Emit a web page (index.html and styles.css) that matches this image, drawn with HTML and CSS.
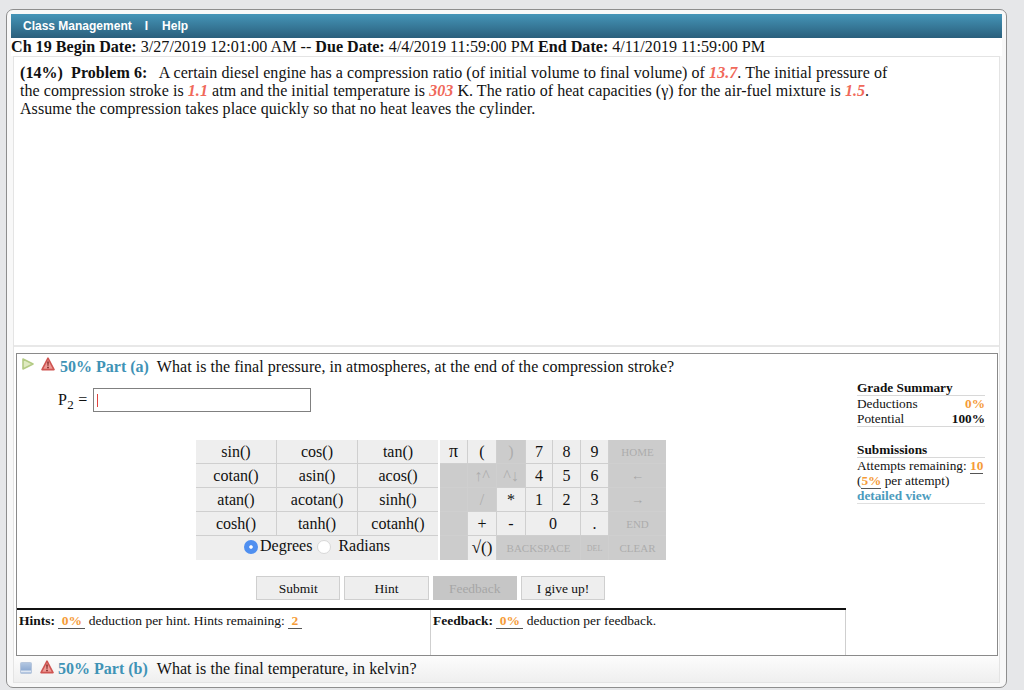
FILE: index.html
```html
<!DOCTYPE html>
<html lang="en">
<head>
<meta charset="utf-8">
<title>Problem 6</title>
<link rel="stylesheet" href="styles.css">
</head>
<body>
<div class="card">
  <nav class="topbar"><span>Class Management</span><span class="sep">I</span><span>Help</span></nav>
  <div class="dates"><b>Ch 19 Begin Date:</b> 3/27/2019 12:01:00 AM -- <b>Due Date:</b> 4/4/2019 11:59:00 PM <b>End Date:</b> 4/11/2019 11:59:00 PM</div>
  <div class="content">
  <section class="problem">
    <p><b>(14%)&nbsp; Problem 6:</b>&nbsp;&nbsp; A certain diesel engine has a compression ratio (of initial volume to final volume) of <i class="val">13.7</i>. The initial pressure of the compression stroke is <i class="val">1.1</i> atm and the initial temperature is <i class="val">303</i> K. The ratio of heat capacities (γ) for the air-fuel mixture is <i class="val">1.5</i>.<br>Assume the compression takes place quickly so that no heat leaves the cylinder.</p>
  </section>
  <section class="part">
    <div class="part-head">
      <svg class="ico-play" width="12" height="12" viewBox="0 0 12 12"><path d="M1 1 L11 6 L1 11 Z" fill="#dfeac0" stroke="#b3cb84" stroke-width="1.6" stroke-linejoin="round"/></svg>
      <svg class="ico-warn" width="14" height="14" viewBox="0 0 14 14"><path d="M7 1.2 L13 12.6 H1 Z" fill="#ee9a96" stroke="#cf5552" stroke-width="1.6" stroke-linejoin="round"/><path d="M6.2 4.5 H7.8 L7.4 9 H6.6 Z M6.2 9.8 H7.8 V11.3 H6.2 Z" fill="#7d2522"/></svg>
      <span class="part-name">50% Part (a)</span><span class="question">What is the final pressure, in atmospheres, at the end of the compression stroke?</span>
    </div>
    <div class="part-body">
      <div class="work">
        <div class="answer"><span class="label">P<sub>2</sub> =</span><div class="input"><span class="caret"></span></div></div>
        <div class="calc">
          <div class="funcs">
            <div class="key">sin()</div><div class="key">cos()</div><div class="key">tan()</div>
            <div class="key">cotan()</div><div class="key">asin()</div><div class="key">acos()</div>
            <div class="key">atan()</div><div class="key">acotan()</div><div class="key">sinh()</div>
            <div class="key">cosh()</div><div class="key">tanh()</div><div class="key">cotanh()</div>
            <div class="mode"><span class="radio on"></span>Degrees<span class="radio"></span><span class="rad">Radians</span></div>
          </div>
          <div class="pad">
            <div class="key pi">π</div><div class="key">(</div><div class="key off">)</div><div class="key">7</div><div class="key">8</div><div class="key">9</div><div class="key off small">HOME</div>
            <div class="key off"></div><div class="key off">↑^</div><div class="key off">^↓</div><div class="key">4</div><div class="key">5</div><div class="key">6</div><div class="key off arrow">←</div>
            <div class="key off"></div><div class="key off">/</div><div class="key">*</div><div class="key">1</div><div class="key">2</div><div class="key">3</div><div class="key off arrow">→</div>
            <div class="key off"></div><div class="key">+</div><div class="key">-</div><div class="key span2">0</div><div class="key">.</div><div class="key off small">END</div>
            <div class="key off"></div><div class="key root">√()</div><div class="key off small span3">BACKSPACE</div><div class="key off tiny">DEL</div><div class="key off small">CLEAR</div>
          </div>
        </div>
        <div class="actions">
          <div class="btn">Submit</div><div class="btn">Hint</div><div class="btn off">Feedback</div><div class="btn">I give up!</div>
        </div>
      </div>
      <aside class="side">
        <h4 class="side-title">Grade Summary</h4>
        <div class="row"><span>Deductions</span><b class="orange">0%</b></div>
        <div class="row last"><span>Potential</span><b>100%</b></div>
        <h4 class="side-title sub">Submissions</h4>
        <div class="att">Attempts remaining: <b class="orange under">10</b><br>(<b class="orange under">5%</b> per attempt)<br><a class="detail">detailed view</a></div>
      </aside>
    </div>
    <div class="notes">
      <div class="note hints"><b>Hints:</b> <span class="pct">&nbsp;0%&nbsp;</span>&nbsp;deduction per hint. Hints remaining: <span class="pct">&nbsp;2&nbsp;</span></div>
      <div class="note feedback"><b>Feedback:</b> <span class="pct">&nbsp;0%&nbsp;</span>&nbsp;deduction per feedback.</div>
    </div>
  </section>
  <div class="part-b">
    <svg class="ico-min" width="12" height="12" viewBox="0 0 12 12"><defs><linearGradient id="minfill" x1="0" y1="0" x2="0" y2="1"><stop offset="0" stop-color="#b4c8e2"/><stop offset="1" stop-color="#7f9fcc"/></linearGradient></defs><rect x=".5" y=".5" width="11" height="11" rx="1" fill="url(#minfill)" stroke="#b7c6dc"/><rect x="1" y="8.5" width="10" height="2" fill="#dfe7f2"/></svg>
    <svg class="ico-warn" width="14" height="14" viewBox="0 0 14 14"><path d="M7 1.2 L13 12.6 H1 Z" fill="#ee9a96" stroke="#cf5552" stroke-width="1.6" stroke-linejoin="round"/><path d="M6.2 4.5 H7.8 L7.4 9 H6.6 Z M6.2 9.8 H7.8 V11.3 H6.2 Z" fill="#7d2522"/></svg>
    <span class="part-name">50% Part (b)</span><span class="question">What is the final temperature, in kelvin?</span>
  </div>
  </div>
</div>
</body>
</html>
```

FILE: styles.css
```css
* { box-sizing: border-box; }
html, body { height: 100%; }
body {
  margin: 0;
  background: #e6e7e9;
  font-family: "Liberation Serif", "Times New Roman", serif;
  color: #111;
  overflow: hidden;
  padding: 9px 17px 2px 6px;
}
.card {
  height: 679px;
  background: #f8f8f8;
  border: 1px solid #8e8e8e;
  border-radius: 7px;
  padding: 4px 4px 0;
  display: flex;
  flex-direction: column;
  overflow: hidden;
}
.topbar {
  height: 24px;
  flex: none;
  background: linear-gradient(#4595b8, #2a5f7c);
  color: #fff;
  font-family: "Liberation Sans", Arial, sans-serif;
  font-weight: bold;
  font-size: 12px;
  display: flex;
  align-items: center;
  padding-left: 12px;
}
.sep { margin: 0 14px 0 13px; }
.dates {
  height: 18px;
  flex: none;
  font-size: 16.12px;
  line-height: 18px;
  white-space: nowrap;
  background: #fff;
}
.content {
  height: 627px;
  flex: none;
  margin: 0 2px;
  border: 1px solid #e4e4e4;
  background: linear-gradient(#fff 95%, #efefef);
}
.problem {
  height: 290px;
  border-bottom: 2px solid #e8e8e8;
  padding: 7px 6px;
  background: #fff;
}
.problem p { margin: 0; font-size: 16px; line-height: 18px; width: 880px; letter-spacing: .06px; }
.val { color: #f0695a; font-weight: bold; }
.part {
  height: 303px;
  margin: 6px 1px 0 2px;
  border: 1px solid #8a8a8a;
  background: #fff;
  display: flex;
  flex-direction: column;
}
.part-head {
  height: 26px;
  flex: none;
  display: flex;
  align-items: center;
  padding-left: 5px;
  font-size: 16px;
}
.ico-play { flex: none; margin-top: -6px; }
.ico-warn { margin: -6px 5px 0 7px; flex: none; }
.part-name { color: #3f93b6; font-weight: bold; font-size: 16px; margin-right: 8px; white-space: nowrap; }
.question { white-space: nowrap; letter-spacing: .04px; }
.part-b .part-name { margin-right: 9px; }
.part-body { flex: 1; display: flex; min-height: 0; }
.work { width: 840px; flex: none; }
.answer { display: flex; align-items: center; padding: 7px 0 0 41px; height: 33px; font-size: 16px; }
.label { width: 35px; white-space: nowrap; letter-spacing: .3px; }
sub { font-size: 13px; line-height: 0; }
.input {
  width: 218px;
  height: 24px;
  border: 1px solid #808080;
  display: flex;
  align-items: center;
  padding-left: 3px;
}
.caret { width: 1px; height: 13px; background: #e0443e; }
.calc { display: flex; gap: 2px; margin: 27px 0 0 179px; }
.funcs {
  width: 242px;
  display: grid;
  grid-template-columns: repeat(3, 1fr);
  grid-template-rows: repeat(4, 23px) 24px;
  gap: 1px;
  background: #cfcfcf;
}
.key {
  background: #eeeeee;
  display: flex;
  align-items: center;
  justify-content: center;
  font-size: 16px;
  white-space: nowrap;
}
.key.pi { font-size: 18px; }
.mode {
  grid-column: 1 / 4;
  background: #eeeeee;
  display: flex;
  align-items: center;
  justify-content: center;
  font-size: 16px;
  padding: 0 0 4px 0;
}
.radio {
  width: 14px;
  height: 14px;
  border-radius: 50%;
  background: #fff;
  border: 1px solid #d8d8d8;
  margin: 1px 7px 0 5px;
}
.radio.on { background: #4f8ff0; border: 5px solid #4f8ff0; box-shadow: inset 0 0 0 2px #fff; margin: 1px 2px 0 0; }
.pad {
  width: 226px;
  display: grid;
  grid-template-columns: 27px 28px 28px 26px 27px 27px 57px;
  grid-template-rows: repeat(4, 23px) 24px;
  gap: 1px;
  background: #cfcfcf;
}
.key.off { background: #cccccc; color: #adadad; }
.key.small { font-size: 11px; }
.key.arrow { font-size: 13px; color: #a6a6a6; }
.key.tiny { font-size: 8px; }
.key.root { font-size: 17px; }
.span2 { grid-column: span 2; }
.span3 { grid-column: span 3; }
.actions { display: flex; gap: 4px; margin: 16px 0 0 239px; }
.btn {
  width: 84.3px;
  height: 24px;
  background: #eeeeee;
  border: 1px solid #cfcfcf;
  display: flex;
  align-items: center;
  justify-content: center;
  font-size: 13.5px;
  padding-top: 1px;
}
.btn.off { background: #c6c6c6; color: #a6a6a6; border-color: #c6c6c6; }
.side { flex: 1; font-size: 13.3px; line-height: 15px; padding-right: 12px; }
.side-title { margin: 0; font-size: 13.3px; line-height: 15px; font-weight: bold; border-bottom: 1px solid #d8d8d8; }
.side-title.sub { margin-top: 15px; }
.row { display: flex; justify-content: space-between; }
.row.last { border-bottom: 1px solid #d8d8d8; }
.orange { color: #f59b38; }
.under { border-bottom: 1px solid #555; }
.att { border-bottom: 1px solid #e0e0e0; }
.detail { color: #4b9bbd; font-weight: bold; }
.notes {
  height: 47px;
  flex: none;
  border-top: 2px solid #111;
  width: 829px;
  display: flex;
  font-size: 13.5px;
}
.note { padding: 3px 0 0 2px; white-space: nowrap; }
.hints { width: 414px; border-right: 1px solid #cfcfcf; }
.feedback { flex: 1; border-right: 1px solid #cfcfcf; }
.pct { color: #f59b38; font-weight: bold; border-bottom: 1px solid #555; }
.part-b {
  height: 26px;
  display: flex;
  align-items: center;
  padding-left: 6px;
  font-size: 16px;
}
.part-b .ico-min { flex: none; margin-top: -3px; }
.part-b .ico-warn { margin: -5px 4px 0 8px; }
```
